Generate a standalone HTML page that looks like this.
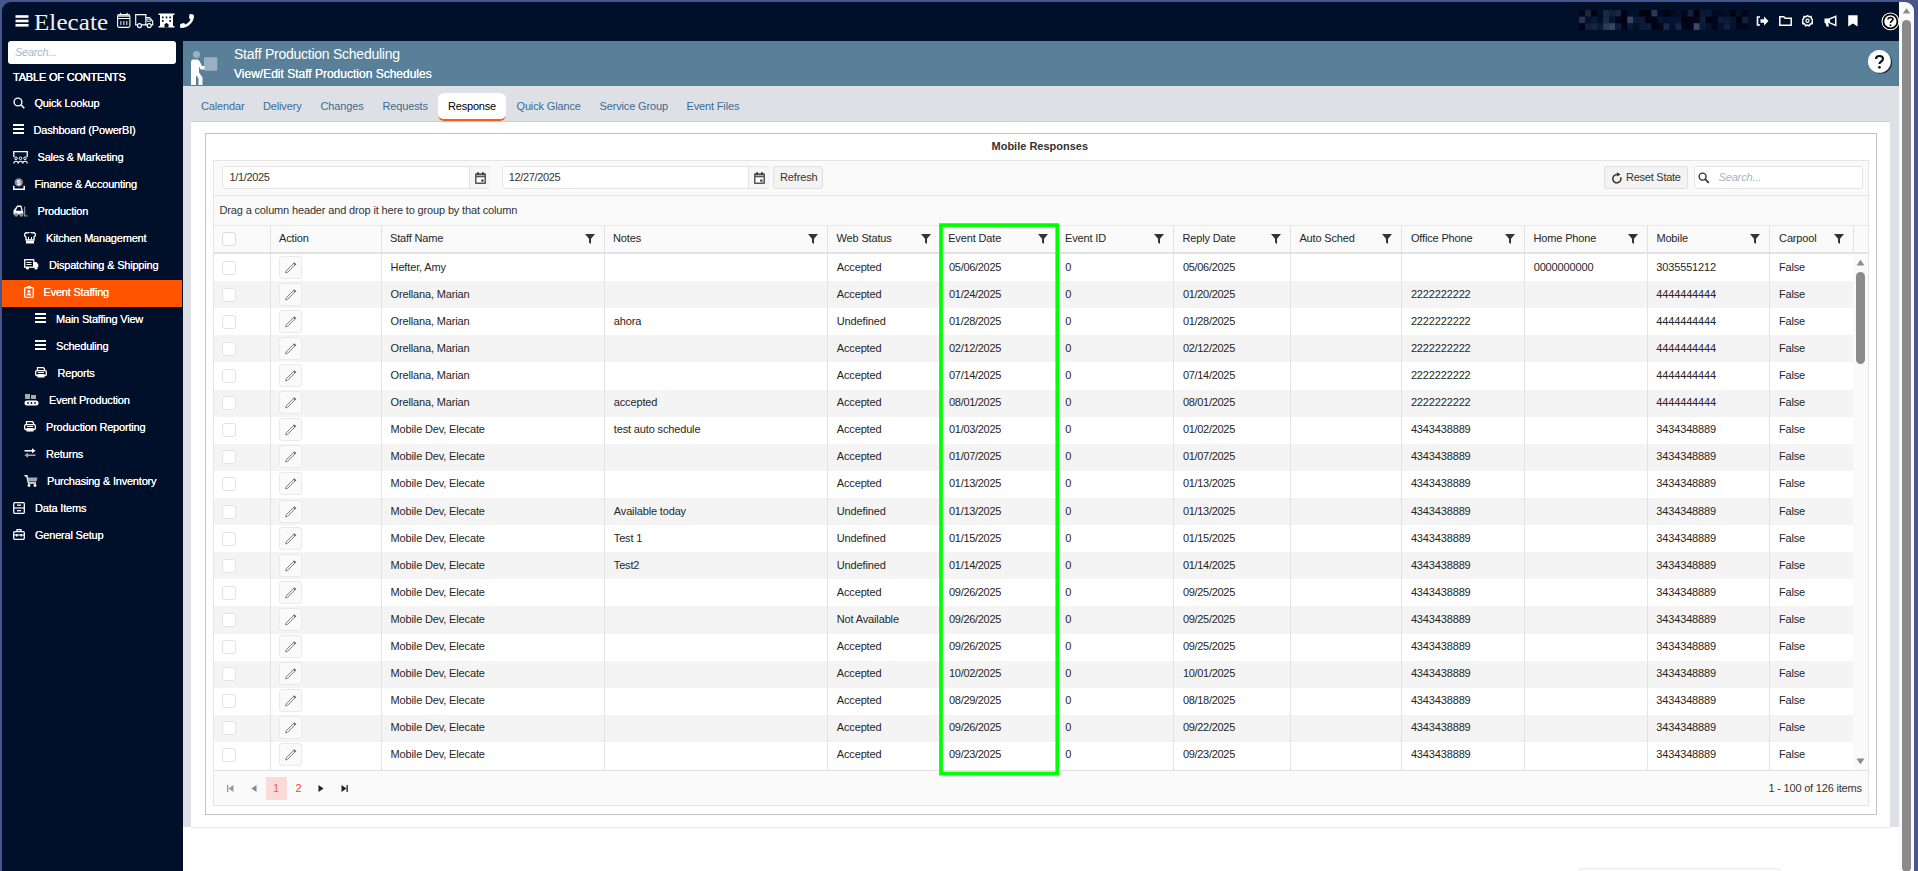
<!DOCTYPE html><html><head><meta charset="utf-8"><style>
html,body{margin:0;padding:0}
body{width:1918px;height:871px;overflow:hidden;background:#47568a;position:relative;font-family:'Liberation Sans', sans-serif}
.t{position:absolute;white-space:nowrap;font-family:'Liberation Sans', sans-serif}
svg{display:block}
</style></head><body>
<div style="position:absolute;left:2px;top:2px;width:1912px;height:869px;border-radius:9px 9px 0 0;overflow:hidden">
<div style="position:absolute;left:-2px;top:-2px;width:1918px;height:871px">
<div style="position:absolute;left:2px;top:2px;width:1897px;height:39px;background:#01102a"></div>
<div style="position:absolute;left:2px;top:41px;width:181px;height:830px;background:#01102a"></div>
<div style="position:absolute;left:183px;top:41px;width:1716px;height:45px;background:#5a7f99"></div>
<div style="position:absolute;left:183px;top:86px;width:1716px;height:741px;background:#dde1e6"></div>
<div style="position:absolute;left:183px;top:827px;width:1716px;height:44px;background:#fff"></div>
<div style="position:absolute;left:191px;top:121px;width:1699px;height:705px;background:#fff;border-top:1px solid #c9cdd2;border-bottom:1px solid #e8e8e8"></div>
<div style="position:absolute;left:1899px;top:2px;width:15px;height:869px;background:#fafafa"></div>
<div style="position:absolute;left:1902px;top:20px;width:9px;height:852px;background:#8b8b8b;border-radius:4.5px"></div>
<svg style="position:absolute;left:1902px;top:8px;" width="9" height="6" viewBox="0 0 9 6"><path d="M0.8 5.5 L4.5 0.2 L8.2 5.5Z" fill="#8b8b8b"/></svg>
<svg style="position:absolute;left:15px;top:15px;" width="14" height="12" viewBox="0 0 14 12"><rect x="0.5" y="0.2" width="13" height="2.6" fill="#fff"/><rect x="0.5" y="4.7" width="13" height="2.6" fill="#fff"/><rect x="0.5" y="9.0" width="13" height="2.6" fill="#fff"/></svg>
<div class="t" style="left:34px;top:11px;font-family:'Liberation Serif',serif;font-size:25px;line-height:25px;color:#f2f2f2;letter-spacing:0.1px;transform:scaleY(0.9);transform-origin:0 0">Elecate</div>
<svg style="position:absolute;left:117px;top:12px;" width="14" height="17" viewBox="0 0 14 17"><rect x="0.6" y="2.6" width="12.3" height="12.8" rx="1.6" fill="none" stroke="#fff" stroke-width="1.1"/><rect x="1" y="3.2" width="11.5" height="1.6" fill="#ddd"/><rect x="0.6" y="6" width="12.3" height="1" fill="#fff"/><rect x="3" y="0.8" width="1.1" height="2.4" fill="#fff"/><rect x="9.5" y="0.8" width="1.1" height="2.4" fill="#fff"/><rect x="3.3" y="9" width="1.1" height="4" fill="#fff" opacity="0.85"/><rect x="6.3" y="9" width="1.1" height="4" fill="#fff" opacity="0.85"/><rect x="9.2" y="9" width="1.1" height="4" fill="#fff" opacity="0.85"/></svg>
<svg style="position:absolute;left:135px;top:13px;" width="19" height="16" viewBox="0 0 19 16"><path d="M0.7 1.6 H10.8 V11.8 H0.7Z" fill="none" stroke="#fff" stroke-width="1.15"/><path d="M10.8 4.6 H14.6 L17.7 8.3 V11.8 H10.8" fill="none" stroke="#fff" stroke-width="1.15"/><path d="M12 6 L14 6 L16 8.3 H12Z" fill="none" stroke="#fff" stroke-width="0.8"/><circle cx="4.5" cy="12.6" r="2" fill="#01102a" stroke="#fff" stroke-width="1.15"/><circle cx="14.2" cy="12.6" r="2" fill="#01102a" stroke="#fff" stroke-width="1.15"/></svg>
<svg style="position:absolute;left:158px;top:13px;" width="17" height="15" viewBox="0 0 17 15"><path d="M0.5 0.5 H16.5 V2 H15 V13 H16.5 V14.5 H0.5 V13 H2 V2 H0.5Z" fill="#fff"/><rect x="4" y="3.5" width="1.6" height="1.8" fill="#01102a"/><rect x="7.7" y="3.5" width="1.6" height="1.8" fill="#01102a"/><rect x="11.4" y="3.5" width="1.6" height="1.8" fill="#01102a"/><rect x="4" y="7" width="1.6" height="1.8" fill="#01102a"/><rect x="11.4" y="7" width="1.6" height="1.8" fill="#01102a"/><path d="M6.5 11.5 Q8.5 8.5 10.5 11.5 V14.5 H6.5Z" fill="#01102a"/></svg>
<svg style="position:absolute;left:179px;top:13px;" width="16" height="16" viewBox="0 0 16 16"><path d="M10.5 1 L14.5 1.5 L15 4 C14 10 9 14.5 2.5 15 L1 14.5 L1.2 11 L5 10 L6.5 11.5 C8.5 10.5 10.5 8.5 11.5 6.5 L10 5Z" fill="#fff"/></svg>
<svg style="position:absolute;left:1579px;top:10.2px;" width="170" height="20" viewBox="0 0 170 20"><rect x="0.00" y="0.0" width="6.1" height="6.7" fill="#050318"/><rect x="6.04" y="0.0" width="6.1" height="6.7" fill="#1a2640"/><rect x="12.07" y="0.0" width="6.1" height="6.7" fill="#02020f"/><rect x="18.11" y="0.0" width="6.1" height="6.7" fill="#011028"/><rect x="24.14" y="0.0" width="6.1" height="6.7" fill="#1c2a45"/><rect x="30.18" y="0.0" width="6.1" height="6.7" fill="#142038"/><rect x="36.22" y="0.0" width="6.1" height="6.7" fill="#172540"/><rect x="42.25" y="0.0" width="6.1" height="6.7" fill="#02020f"/><rect x="48.29" y="0.0" width="6.1" height="6.7" fill="#011028"/><rect x="54.32" y="0.0" width="6.1" height="6.7" fill="#011028"/><rect x="60.36" y="0.0" width="6.1" height="6.7" fill="#02020f"/><rect x="66.40" y="0.0" width="6.1" height="6.7" fill="#02020f"/><rect x="72.43" y="0.0" width="6.1" height="6.7" fill="#2a3a58"/><rect x="78.47" y="0.0" width="6.1" height="6.7" fill="#010a22"/><rect x="84.50" y="0.0" width="6.1" height="6.7" fill="#02020f"/><rect x="90.54" y="0.0" width="6.1" height="6.7" fill="#030720"/><rect x="96.58" y="0.0" width="6.1" height="6.7" fill="#011028"/><rect x="102.61" y="0.0" width="6.1" height="6.7" fill="#03041a"/><rect x="108.65" y="0.0" width="6.1" height="6.7" fill="#142038"/><rect x="114.68" y="0.0" width="6.1" height="6.7" fill="#02020f"/><rect x="120.72" y="0.0" width="6.1" height="6.7" fill="#0a1a34"/><rect x="126.76" y="0.0" width="6.1" height="6.7" fill="#0a1a34"/><rect x="132.79" y="0.0" width="6.1" height="6.7" fill="#02081e"/><rect x="138.83" y="0.0" width="6.1" height="6.7" fill="#02081e"/><rect x="144.86" y="0.0" width="6.1" height="6.7" fill="#011028"/><rect x="150.90" y="0.0" width="6.1" height="6.7" fill="#02020f"/><rect x="156.94" y="0.0" width="6.1" height="6.7" fill="#011028"/><rect x="162.97" y="0.0" width="6.1" height="6.7" fill="#03041a"/><rect x="0.00" y="6.6" width="6.1" height="6.7" fill="#253555"/><rect x="6.04" y="6.6" width="6.1" height="6.7" fill="#021230"/><rect x="12.07" y="6.6" width="6.1" height="6.7" fill="#0a1a34"/><rect x="18.11" y="6.6" width="6.1" height="6.7" fill="#011028"/><rect x="24.14" y="6.6" width="6.1" height="6.7" fill="#1c2a45"/><rect x="30.18" y="6.6" width="6.1" height="6.7" fill="#061530"/><rect x="36.22" y="6.6" width="6.1" height="6.7" fill="#02061a"/><rect x="42.25" y="6.6" width="6.1" height="6.7" fill="#02020f"/><rect x="48.29" y="6.6" width="6.1" height="6.7" fill="#34466a"/><rect x="54.32" y="6.6" width="6.1" height="6.7" fill="#0a1a34"/><rect x="60.36" y="6.6" width="6.1" height="6.7" fill="#0c1a36"/><rect x="66.40" y="6.6" width="6.1" height="6.7" fill="#02021a"/><rect x="72.43" y="6.6" width="6.1" height="6.7" fill="#02031a"/><rect x="78.47" y="6.6" width="6.1" height="6.7" fill="#061530"/><rect x="84.50" y="6.6" width="6.1" height="6.7" fill="#021230"/><rect x="90.54" y="6.6" width="6.1" height="6.7" fill="#051530"/><rect x="96.58" y="6.6" width="6.1" height="6.7" fill="#051530"/><rect x="102.61" y="6.6" width="6.1" height="6.7" fill="#02020f"/><rect x="108.65" y="6.6" width="6.1" height="6.7" fill="#05041a"/><rect x="114.68" y="6.6" width="6.1" height="6.7" fill="#05041a"/><rect x="120.72" y="6.6" width="6.1" height="6.7" fill="#0f1d38"/><rect x="126.76" y="6.6" width="6.1" height="6.7" fill="#02020f"/><rect x="132.79" y="6.6" width="6.1" height="6.7" fill="#03051e"/><rect x="138.83" y="6.6" width="6.1" height="6.7" fill="#101d38"/><rect x="144.86" y="6.6" width="6.1" height="6.7" fill="#0c1a36"/><rect x="150.90" y="6.6" width="6.1" height="6.7" fill="#061530"/><rect x="156.94" y="6.6" width="6.1" height="6.7" fill="#02020f"/><rect x="162.97" y="6.6" width="6.1" height="6.7" fill="#142038"/><rect x="0.00" y="13.2" width="6.1" height="6.7" fill="#02020f"/><rect x="6.04" y="13.2" width="6.1" height="6.7" fill="#142038"/><rect x="12.07" y="13.2" width="6.1" height="6.7" fill="#172540"/><rect x="18.11" y="13.2" width="6.1" height="6.7" fill="#0c1a36"/><rect x="24.14" y="13.2" width="6.1" height="6.7" fill="#2a3a58"/><rect x="30.18" y="13.2" width="6.1" height="6.7" fill="#34466a"/><rect x="36.22" y="13.2" width="6.1" height="6.7" fill="#0f1d38"/><rect x="42.25" y="13.2" width="6.1" height="6.7" fill="#02031e"/><rect x="48.29" y="13.2" width="6.1" height="6.7" fill="#0a1a34"/><rect x="54.32" y="13.2" width="6.1" height="6.7" fill="#02102a"/><rect x="60.36" y="13.2" width="6.1" height="6.7" fill="#0c1a36"/><rect x="66.40" y="13.2" width="6.1" height="6.7" fill="#101d38"/><rect x="72.43" y="13.2" width="6.1" height="6.7" fill="#02020f"/><rect x="78.47" y="13.2" width="6.1" height="6.7" fill="#03051e"/><rect x="84.50" y="13.2" width="6.1" height="6.7" fill="#1c2a45"/><rect x="90.54" y="13.2" width="6.1" height="6.7" fill="#021230"/><rect x="96.58" y="13.2" width="6.1" height="6.7" fill="#1a2640"/><rect x="102.61" y="13.2" width="6.1" height="6.7" fill="#03041a"/><rect x="108.65" y="13.2" width="6.1" height="6.7" fill="#03041a"/><rect x="114.68" y="13.2" width="6.1" height="6.7" fill="#3a4a68"/><rect x="120.72" y="13.2" width="6.1" height="6.7" fill="#0c1a36"/><rect x="126.76" y="13.2" width="6.1" height="6.7" fill="#021230"/><rect x="132.79" y="13.2" width="6.1" height="6.7" fill="#03041a"/><rect x="138.83" y="13.2" width="6.1" height="6.7" fill="#021230"/><rect x="144.86" y="13.2" width="6.1" height="6.7" fill="#142038"/><rect x="150.90" y="13.2" width="6.1" height="6.7" fill="#021230"/><rect x="156.94" y="13.2" width="6.1" height="6.7" fill="#03051e"/><rect x="162.97" y="13.2" width="6.1" height="6.7" fill="#03041a"/></svg>
<svg style="position:absolute;left:1756px;top:16px;" width="13" height="10" viewBox="0 0 13 10"><path d="M4 1 H1.5 V9 H4" fill="none" stroke="#fff" stroke-width="1.6"/><path d="M4.5 3.3 H8 V0.5 L12.5 5 L8 9.5 V6.7 H4.5Z" fill="#fff"/></svg>
<svg style="position:absolute;left:1779px;top:16px;" width="13" height="10" viewBox="0 0 13 10"><path d="M0.8 0.8 H4.8 L6.2 2.3 H12.2 V9.2 H0.8Z" fill="none" stroke="#fff" stroke-width="1.5"/></svg>
<svg style="position:absolute;left:1802px;top:15px;" width="11" height="12" viewBox="0 0 11 12"><path d="M5.5 0.5 L7 1.8 L9 1.6 L9.4 3.6 L10.8 5 L10 6.8 L10.4 8.6 L8.4 9 L7.2 10.8 L5.5 10 L3.8 10.8 L2.6 9 L0.6 8.6 L1 6.8 L0.2 5 L1.6 3.6 L2 1.6 L4 1.8Z" fill="none" stroke="#fff" stroke-width="1.5"/><circle cx="5.5" cy="5.7" r="1.6" fill="none" stroke="#fff" stroke-width="1.2"/></svg>
<svg style="position:absolute;left:1824px;top:15px;" width="14" height="12" viewBox="0 0 14 12"><path d="M0.5 3.5 H4.5 L12.5 0.3 V11.5 L4.5 8 H4 L5 11.5 H2.5 L1.5 8 H0.5Z" fill="#fff"/><path d="M6 4.5 L11 2.5 V9.2 L6 7.2Z" fill="#01102a"/></svg>
<svg style="position:absolute;left:1848px;top:15px;" width="10" height="12" viewBox="0 0 10 12"><path d="M0.2 0.2 H9.6 V11.6 L4.9 8.6 L0.2 11.6Z" fill="#fff"/></svg>
<svg style="position:absolute;left:1881px;top:11.5px;" width="19" height="19" viewBox="0 0 19 19"><circle cx="9.4" cy="9.4" r="8.9" fill="#fff"/><circle cx="9.4" cy="9.4" r="7" fill="#fff" stroke="#000" stroke-width="1.8"/><path d="M7 7.4 C7 4.8 11.9 4.8 11.9 7.4 C11.9 9 9.5 9 9.5 11" fill="none" stroke="#000" stroke-width="1.6"/><circle cx="9.5" cy="13.3" r="1" fill="#000"/></svg>
<div style="position:absolute;left:8px;top:41px;width:168px;height:23px;background:#fff;border-radius:3px"></div>
<div class="t" style="left:15px;top:47px;font-size:11px;line-height:11px;color:#a3b8cf;font-weight:normal;font-style:italic;letter-spacing:-0.25px">Search...</div>
<div class="t" style="left:13px;top:72px;font-size:11px;line-height:11px;color:#fff;font-weight:normal;letter-spacing:-0.19px;text-shadow:0 0 0.5px #fff,0 0 0.5px #fff">TABLE OF CONTENTS</div>
<div class="t" style="left:34.5px;top:98px;font-size:11px;line-height:11px;color:#fff;font-weight:normal;letter-spacing:-0.2px;text-shadow:0 0 0.3px #fff">Quick Lookup</div>
<svg style="position:absolute;left:13px;top:97px" width="12" height="12" viewBox="0 0 12 12"><circle cx="5" cy="5" r="3.9" fill="none" stroke="#fff" stroke-width="1.4"/><line x1="7.8" y1="7.8" x2="11.3" y2="11.3" stroke="#fff" stroke-width="1.6"/></svg>
<div class="t" style="left:33.5px;top:125px;font-size:11px;line-height:11px;color:#fff;font-weight:normal;letter-spacing:-0.2px;text-shadow:0 0 0.3px #fff">Dashboard (PowerBI)</div>
<svg style="position:absolute;left:13px;top:124px" width="11" height="10" viewBox="0 0 11 10"><rect x="0" y="0" width="11" height="2" fill="#fff"/><rect x="0" y="4" width="11" height="2" fill="#fff"/><rect x="0" y="8" width="11" height="2" fill="#fff"/></svg>
<div class="t" style="left:37.5px;top:152px;font-size:11px;line-height:11px;color:#fff;font-weight:normal;letter-spacing:-0.2px;text-shadow:0 0 0.3px #fff">Sales &amp; Marketing</div>
<svg style="position:absolute;left:13px;top:151px" width="15" height="13" viewBox="0 0 15 13"><path d="M0.8 6 V0.7 H14.2 V6" fill="none" stroke="#fff" stroke-width="1.3"/><circle cx="3" cy="7.3" r="1.3" fill="none" stroke="#fff" stroke-width="1"/><circle cx="7.5" cy="7.3" r="1.3" fill="none" stroke="#fff" stroke-width="1"/><circle cx="12" cy="7.3" r="1.3" fill="none" stroke="#fff" stroke-width="1"/><path d="M0.8 12.5 A2.2 2.2 0 0 1 5.2 12.5 M5.3 12.5 A2.2 2.2 0 0 1 9.7 12.5 M9.8 12.5 A2.2 2.2 0 0 1 14.2 12.5" fill="none" stroke="#fff" stroke-width="1.1"/></svg>
<div class="t" style="left:34.5px;top:179px;font-size:11px;line-height:11px;color:#fff;font-weight:normal;letter-spacing:-0.2px;text-shadow:0 0 0.3px #fff">Finance &amp; Accounting</div>
<svg style="position:absolute;left:13px;top:178px" width="12" height="12" viewBox="0 0 12 12"><circle cx="5.8" cy="4.4" r="4.2" fill="#8a8c9a"/><text x="5.8" y="7" font-size="7" text-anchor="middle" fill="#fff" font-family="Liberation Sans" font-weight="bold">$</text><path d="M0.8 7.8 V11.2 H11.2 V7.8" fill="none" stroke="#fff" stroke-width="1.5"/></svg>
<div class="t" style="left:37.5px;top:206px;font-size:11px;line-height:11px;color:#fff;font-weight:normal;letter-spacing:-0.2px;text-shadow:0 0 0.3px #fff">Production</div>
<svg style="position:absolute;left:13px;top:205px" width="15" height="12" viewBox="0 0 15 12"><path d="M0.5 9.5 V5.5 L4.3 0.5 H8.3 L10.3 7.5 V9.5Z" fill="#fff"/><path d="M4.6 2 H7.5 L8.5 5.8 H2.8Z" fill="#01102a"/><circle cx="3.2" cy="9.8" r="1.9" fill="#8a8c9a"/><circle cx="8.3" cy="9.8" r="1.9" fill="#8a8c9a"/><path d="M11.6 1.5 V10.9 H14.5" fill="none" stroke="#8a8c9a" stroke-width="1.3"/></svg>
<div class="t" style="left:46px;top:233px;font-size:11px;line-height:11px;color:#fff;font-weight:normal;letter-spacing:-0.2px;text-shadow:0 0 0.3px #fff">Kitchen Management</div>
<svg style="position:absolute;left:24px;top:232px" width="12" height="12" viewBox="0 0 12 12"><path d="M2 5 C-1 3 1 0 4 1 C5 -0.5 7 -0.5 8 1 C11 0 13 3 10 5 V8 H2Z" fill="none" stroke="#fff" stroke-width="1.3"/><rect x="2" y="9" width="8" height="2.5" fill="#fff"/><line x1="4.5" y1="5" x2="4.5" y2="8" stroke="#fff"/><line x1="7.5" y1="5" x2="7.5" y2="8" stroke="#fff"/></svg>
<div class="t" style="left:49px;top:260px;font-size:11px;line-height:11px;color:#fff;font-weight:normal;letter-spacing:-0.2px;text-shadow:0 0 0.3px #fff">Dispatching &amp; Shipping</div>
<svg style="position:absolute;left:24px;top:259px" width="15" height="11" viewBox="0 0 15 11"><rect x="0.7" y="0.7" width="9" height="7.5" fill="none" stroke="#fff" stroke-width="1.3"/><path d="M9.7 3 H12.5 L14.3 5.5 V8.2 H9.7" fill="#fff"/><circle cx="3.5" cy="9" r="1.6" fill="#fff"/><circle cx="12" cy="9" r="1.6" fill="#fff"/><line x1="2.5" y1="3.5" x2="7.5" y2="3.5" stroke="#fff"/><line x1="2.5" y1="5.5" x2="7.5" y2="5.5" stroke="#fff"/></svg>
<div style="position:absolute;left:2px;top:280px;width:180px;height:27px;background:#ff5500"></div>
<div class="t" style="left:43.5px;top:287px;font-size:11px;line-height:11px;color:#fff;font-weight:normal;letter-spacing:-0.2px;text-shadow:0 0 0.3px #fff">Event Staffing</div>
<svg style="position:absolute;left:24px;top:286px" width="10" height="12" viewBox="0 0 10 12"><rect x="0.7" y="1.7" width="8.6" height="9.6" rx="1" fill="none" stroke="#fff" stroke-width="1.3"/><rect x="3.2" y="0" width="3.6" height="2.5" fill="#fff"/><circle cx="5" cy="5.5" r="1.4" fill="#fff"/><rect x="2.8" y="7.6" width="4.4" height="1.8" fill="#fff"/></svg>
<div class="t" style="left:56px;top:314px;font-size:11px;line-height:11px;color:#fff;font-weight:normal;letter-spacing:-0.2px;text-shadow:0 0 0.3px #fff">Main Staffing View</div>
<svg style="position:absolute;left:35px;top:313px" width="11" height="10" viewBox="0 0 11 10"><rect x="0" y="0" width="11" height="2" fill="#fff"/><rect x="0" y="4" width="11" height="2" fill="#fff"/><rect x="0" y="8" width="11" height="2" fill="#fff"/></svg>
<div class="t" style="left:56px;top:341px;font-size:11px;line-height:11px;color:#fff;font-weight:normal;letter-spacing:-0.2px;text-shadow:0 0 0.3px #fff">Scheduling</div>
<svg style="position:absolute;left:35px;top:340px" width="11" height="10" viewBox="0 0 11 10"><rect x="0" y="0" width="11" height="2" fill="#fff"/><rect x="0" y="4" width="11" height="2" fill="#fff"/><rect x="0" y="8" width="11" height="2" fill="#fff"/></svg>
<div class="t" style="left:57.5px;top:368px;font-size:11px;line-height:11px;color:#fff;font-weight:normal;letter-spacing:-0.2px;text-shadow:0 0 0.3px #fff">Reports</div>
<svg style="position:absolute;left:35px;top:367px" width="12" height="11" viewBox="0 0 12 11"><path d="M2.5 3.5 V0.7 H8.5 L9.5 1.7 V3.5" fill="none" stroke="#fff" stroke-width="1.3"/><rect x="0.7" y="3.7" width="10.6" height="4.8" rx="1" fill="none" stroke="#fff" stroke-width="1.3"/><rect x="2.5" y="7" width="7" height="3.5" fill="#fff"/><line x1="3" y1="5.5" x2="9" y2="5.5" stroke="#fff"/></svg>
<div class="t" style="left:49px;top:395px;font-size:11px;line-height:11px;color:#fff;font-weight:normal;letter-spacing:-0.2px;text-shadow:0 0 0.3px #fff">Event Production</div>
<svg style="position:absolute;left:24px;top:394px" width="15" height="12" viewBox="0 0 15 12"><rect x="1" y="0" width="5" height="5" fill="#aaa"/><rect x="7" y="1" width="5" height="4" fill="#aaa"/><rect x="0.5" y="6.5" width="14" height="5" rx="2.5" fill="#fff"/><circle cx="4" cy="9" r="0.9" fill="#01102a"/><circle cx="7.5" cy="9" r="0.9" fill="#01102a"/><circle cx="11" cy="9" r="0.9" fill="#01102a"/></svg>
<div class="t" style="left:46px;top:422px;font-size:11px;line-height:11px;color:#fff;font-weight:normal;letter-spacing:-0.2px;text-shadow:0 0 0.3px #fff">Production Reporting</div>
<svg style="position:absolute;left:24px;top:421px" width="12" height="11" viewBox="0 0 12 11"><path d="M2.5 3.5 V0.7 H8.5 L9.5 1.7 V3.5" fill="none" stroke="#fff" stroke-width="1.3"/><rect x="0.7" y="3.7" width="10.6" height="4.8" rx="1" fill="none" stroke="#fff" stroke-width="1.3"/><rect x="2.5" y="7" width="7" height="3.5" fill="#fff"/><line x1="3" y1="5.5" x2="9" y2="5.5" stroke="#fff"/></svg>
<div class="t" style="left:46px;top:449px;font-size:11px;line-height:11px;color:#fff;font-weight:normal;letter-spacing:-0.2px;text-shadow:0 0 0.3px #fff">Returns</div>
<svg style="position:absolute;left:24px;top:448px" width="12" height="10" viewBox="0 0 12 10"><path d="M0.5 2.8 H9" stroke="#fff" stroke-width="1.5"/><path d="M8 0.3 L11.5 2.8 L8 5.2Z" fill="#fff"/><path d="M11.5 7.2 H3" stroke="#aaa" stroke-width="1.5"/><path d="M4 4.8 L0.5 7.2 L4 9.7Z" fill="#aaa"/></svg>
<div class="t" style="left:47px;top:476px;font-size:11px;line-height:11px;color:#fff;font-weight:normal;letter-spacing:-0.2px;text-shadow:0 0 0.3px #fff">Purchasing &amp; Inventory</div>
<svg style="position:absolute;left:24px;top:475px" width="14" height="12" viewBox="0 0 14 12"><path d="M0.5 0.8 H2.8 L4.5 8 H12" fill="none" stroke="#fff" stroke-width="1.5"/><path d="M3.3 2.5 H13.5 L12.5 6.5 H4.2Z" fill="#aaa"/><circle cx="5" cy="10.5" r="1.4" fill="#fff"/><circle cx="11" cy="10.5" r="1.4" fill="#fff"/></svg>
<div class="t" style="left:35px;top:503px;font-size:11px;line-height:11px;color:#fff;font-weight:normal;letter-spacing:-0.2px;text-shadow:0 0 0.3px #fff">Data Items</div>
<svg style="position:absolute;left:13px;top:502px" width="12" height="12" viewBox="0 0 12 12"><rect x="0.7" y="0.7" width="10.6" height="10.6" rx="1" fill="none" stroke="#fff" stroke-width="1.3"/><line x1="0.7" y1="6" x2="11.3" y2="6" stroke="#fff" stroke-width="1.2"/><rect x="4" y="2.5" width="4" height="1.3" fill="#fff"/><rect x="4" y="8" width="4" height="1.3" fill="#fff"/></svg>
<div class="t" style="left:35px;top:530px;font-size:11px;line-height:11px;color:#fff;font-weight:normal;letter-spacing:-0.2px;text-shadow:0 0 0.3px #fff">General Setup</div>
<svg style="position:absolute;left:13px;top:529px" width="12" height="11" viewBox="0 0 12 11"><path d="M4 2.5 V0.7 H8 V2.5" fill="none" stroke="#fff" stroke-width="1.3"/><rect x="0.7" y="2.7" width="10.6" height="7.6" rx="1" fill="none" stroke="#fff" stroke-width="1.3"/><line x1="0.7" y1="6" x2="11.3" y2="6" stroke="#fff" stroke-width="1.2"/><rect x="3" y="5" width="1.5" height="2.5" fill="#fff"/><rect x="7.5" y="5" width="1.5" height="2.5" fill="#fff"/></svg>
<svg style="position:absolute;left:188px;top:48px;" width="32" height="38" viewBox="0 0 32 38"><circle cx="8.5" cy="6.5" r="3.6" fill="#9ab0c0"/><rect x="16" y="9.2" width="13.3" height="13.5" rx="1" fill="#9ab0c0"/><path d="M5 11.5 C3.5 11.5 3 13 3 14.5 V37 H8 V27 L10.5 30.5 V37 H14.5 V29.5 L11 24.5 V18.5 L12.8 21.5 H16.5 V18 H14 L11.5 13 C10.5 11.8 9.5 11.5 8.5 11.5Z" fill="#fff"/></svg>
<div class="t" style="left:234px;top:47px;font-size:14px;line-height:14px;color:#fff;font-weight:normal;letter-spacing:-0.25px">Staff Production Scheduling</div>
<div class="t" style="left:234px;top:68px;font-size:12px;line-height:12px;color:#fff;font-weight:normal;text-shadow:0 0 0.4px #fff">View/Edit Staff Production Schedules</div>
<svg style="position:absolute;left:1866px;top:49px;" width="27" height="27" viewBox="0 0 27 27"><circle cx="14.8" cy="13.4" r="11.3" fill="#1a2230" opacity="0.85"/><circle cx="13.4" cy="12.4" r="11.4" fill="#fff"/><path d="M10 10 C10 6 17 6 17 10 C17 12.5 13.4 12.5 13.4 15" fill="none" stroke="#0a1428" stroke-width="2.2"/><circle cx="13.4" cy="18.3" r="1.4" fill="#0a1428"/></svg>
<div class="t" style="left:201px;top:101px;font-size:11px;line-height:11px;color:#3f6a93;font-weight:normal;letter-spacing:-0.15px">Calendar</div>
<div class="t" style="left:263px;top:101px;font-size:11px;line-height:11px;color:#3f6a93;font-weight:normal;letter-spacing:-0.15px">Delivery</div>
<div class="t" style="left:320.5px;top:101px;font-size:11px;line-height:11px;color:#3f6a93;font-weight:normal;letter-spacing:-0.15px">Changes</div>
<div class="t" style="left:382.5px;top:101px;font-size:11px;line-height:11px;color:#3f6a93;font-weight:normal;letter-spacing:-0.15px">Requests</div>
<div class="t" style="left:516.5px;top:101px;font-size:11px;line-height:11px;color:#3f6a93;font-weight:normal;letter-spacing:-0.15px">Quick Glance</div>
<div class="t" style="left:599.5px;top:101px;font-size:11px;line-height:11px;color:#3f6a93;font-weight:normal;letter-spacing:-0.15px">Service Group</div>
<div class="t" style="left:686.5px;top:101px;font-size:11px;line-height:11px;color:#3f6a93;font-weight:normal;letter-spacing:-0.15px">Event Files</div>
<div style="position:absolute;left:438px;top:93px;width:68px;height:28px;background:#fff;border-radius:6px;box-sizing:border-box;border-bottom:2px solid #ff5a1a"></div>
<div class="t" style="left:448px;top:101px;font-size:11px;line-height:11px;color:#000;font-weight:normal;letter-spacing:-0.2px">Response</div>
<div style="position:absolute;left:205px;top:133px;width:1672px;height:682px;box-sizing:border-box;border:1px solid #c2c2c2;background:#fff"></div>
<div class="t" style="left:991.5px;top:141px;font-size:11px;line-height:11px;color:#333;font-weight:bold;">Mobile Responses</div>
<div style="position:absolute;left:213px;top:160px;width:1656px;height:646px;box-sizing:border-box;border:1px solid #e5e5e5;background:#fff"></div>
<div style="position:absolute;left:214px;top:161px;width:1654px;height:34px;background:#fafafa"></div>
<div style="position:absolute;left:214px;top:195px;width:1654px;height:1px;background:#e5e5e5"></div>
<div style="position:absolute;left:214px;top:196px;width:1654px;height:29px;background:#fafafa"></div>
<div style="position:absolute;left:214px;top:225px;width:1654px;height:1px;background:#e8e8e8"></div>
<div class="t" style="left:219.5px;top:205px;font-size:11px;line-height:11px;color:#333;font-weight:normal;letter-spacing:-0.15px">Drag a column header and drop it here to group by that column</div>
<div style="position:absolute;left:222px;top:166px;width:269px;height:23px;box-sizing:border-box;border:1px solid #e4e4e4;border-radius:3px;background:#fff"></div>
<div style="position:absolute;left:469px;top:167px;width:21px;height:21px;background:#f6f6f6;border-left:1px solid #e4e4e4;border-radius:0 2px 2px 0"></div>
<div class="t" style="left:229.5px;top:172px;font-size:11px;line-height:11px;color:#333;font-weight:normal;letter-spacing:-0.35px">1/1/2025</div>
<svg style="position:absolute;left:475.4px;top:172px;" width="11" height="12" viewBox="0 0 11 12"><rect x="0" y="1.3" width="11" height="10.7" rx="1" fill="#555"/><rect x="1.5" y="5.3" width="8" height="5.2" fill="#fff"/><rect x="1.5" y="3" width="8" height="1" fill="#fff" opacity="0.55"/><rect x="2.3" y="0" width="1.5" height="2.8" rx="0.7" fill="#222"/><rect x="7.2" y="0" width="1.5" height="2.8" rx="0.7" fill="#222"/><rect x="6.3" y="7.6" width="2.2" height="2" fill="#222"/></svg>
<div style="position:absolute;left:502px;top:166px;width:268px;height:23px;box-sizing:border-box;border:1px solid #e4e4e4;border-radius:3px;background:#fff"></div>
<div style="position:absolute;left:748px;top:167px;width:21px;height:21px;background:#f6f6f6;border-left:1px solid #e4e4e4;border-radius:0 2px 2px 0"></div>
<div class="t" style="left:508.7px;top:172px;font-size:11px;line-height:11px;color:#333;font-weight:normal;letter-spacing:-0.35px">12/27/2025</div>
<svg style="position:absolute;left:754.4px;top:172px;" width="11" height="12" viewBox="0 0 11 12"><rect x="0" y="1.3" width="11" height="10.7" rx="1" fill="#555"/><rect x="1.5" y="5.3" width="8" height="5.2" fill="#fff"/><rect x="1.5" y="3" width="8" height="1" fill="#fff" opacity="0.55"/><rect x="2.3" y="0" width="1.5" height="2.8" rx="0.7" fill="#222"/><rect x="7.2" y="0" width="1.5" height="2.8" rx="0.7" fill="#222"/><rect x="6.3" y="7.6" width="2.2" height="2" fill="#222"/></svg>
<div style="position:absolute;left:773px;top:166px;width:50px;height:23px;box-sizing:border-box;border:1px solid #e0e0e0;border-radius:3px;background:#f3f3f3"></div>
<div class="t" style="left:780px;top:172px;font-size:11px;line-height:11px;color:#333;font-weight:normal;letter-spacing:-0.15px">Refresh</div>
<div style="position:absolute;left:1604px;top:166px;width:84px;height:23px;box-sizing:border-box;border:1px solid #e0e0e0;border-radius:3px;background:#f3f3f3"></div>
<svg style="position:absolute;left:1611px;top:172px;" width="12" height="13" viewBox="0 0 12 13"><path d="M5.9 2.6 A4.1 4.1 0 1 0 9.75 5.3" fill="none" stroke="#333" stroke-width="1.5"/><path d="M5.9 0.3 L5.9 4.6 L9.6 2.4Z" fill="#333"/></svg>
<div class="t" style="left:1626px;top:172px;font-size:11px;line-height:11px;color:#333;font-weight:normal;letter-spacing:-0.25px">Reset State</div>
<div style="position:absolute;left:1694px;top:166px;width:169px;height:23px;box-sizing:border-box;border:1px solid #e4e4e4;border-radius:3px;background:#fff"></div>
<svg style="position:absolute;left:1698px;top:172px;" width="12" height="12" viewBox="0 0 12 12"><circle cx="4.6" cy="4.6" r="3.5" fill="none" stroke="#333" stroke-width="1.4"/><line x1="7.2" y1="7.2" x2="10.8" y2="10.8" stroke="#333" stroke-width="1.7"/></svg>
<div class="t" style="left:1718.5px;top:172px;font-size:11px;line-height:11px;color:#a0b4c8;font-weight:normal;font-style:italic;letter-spacing:-0.15px">Search...</div>
<div style="position:absolute;left:214px;top:226px;width:1654px;height:26px;background:#fafafa"></div>
<div style="position:absolute;left:214px;top:252px;width:1654px;height:2px;background:#e2e2e2"></div>
<div style="position:absolute;left:270px;top:226px;width:1px;height:26px;background:#e2e2e2"></div>
<div class="t" style="left:279px;top:233px;font-size:11px;line-height:11px;color:#262626;font-weight:normal;letter-spacing:-0.15px">Action</div>
<div style="position:absolute;left:381px;top:226px;width:1px;height:26px;background:#e2e2e2"></div>
<div class="t" style="left:390px;top:233px;font-size:11px;line-height:11px;color:#262626;font-weight:normal;letter-spacing:-0.15px">Staff Name</div>
<svg style="position:absolute;left:585px;top:234px;" width="10" height="10" viewBox="0 0 10 10"><path d="M0 0 H10 L6 4.8 V10 L4 8.5 V4.8Z" fill="#333"/></svg>
<div style="position:absolute;left:604px;top:226px;width:1px;height:26px;background:#e2e2e2"></div>
<div class="t" style="left:613px;top:233px;font-size:11px;line-height:11px;color:#262626;font-weight:normal;letter-spacing:-0.15px">Notes</div>
<svg style="position:absolute;left:808px;top:234px;" width="10" height="10" viewBox="0 0 10 10"><path d="M0 0 H10 L6 4.8 V10 L4 8.5 V4.8Z" fill="#333"/></svg>
<div style="position:absolute;left:827px;top:226px;width:1px;height:26px;background:#e2e2e2"></div>
<div class="t" style="left:836.5px;top:233px;font-size:11px;line-height:11px;color:#262626;font-weight:normal;letter-spacing:-0.15px">Web Status</div>
<svg style="position:absolute;left:921px;top:234px;" width="10" height="10" viewBox="0 0 10 10"><path d="M0 0 H10 L6 4.8 V10 L4 8.5 V4.8Z" fill="#333"/></svg>
<div style="position:absolute;left:940px;top:226px;width:1px;height:26px;background:#e2e2e2"></div>
<div class="t" style="left:948.2px;top:233px;font-size:11px;line-height:11px;color:#262626;font-weight:normal;letter-spacing:-0.15px">Event Date</div>
<svg style="position:absolute;left:1038px;top:234px;" width="10" height="10" viewBox="0 0 10 10"><path d="M0 0 H10 L6 4.8 V10 L4 8.5 V4.8Z" fill="#333"/></svg>
<div style="position:absolute;left:1057px;top:226px;width:1px;height:26px;background:#e2e2e2"></div>
<div class="t" style="left:1065.0px;top:233px;font-size:11px;line-height:11px;color:#262626;font-weight:normal;letter-spacing:-0.15px">Event ID</div>
<svg style="position:absolute;left:1154px;top:234px;" width="10" height="10" viewBox="0 0 10 10"><path d="M0 0 H10 L6 4.8 V10 L4 8.5 V4.8Z" fill="#333"/></svg>
<div style="position:absolute;left:1173px;top:226px;width:1px;height:26px;background:#e2e2e2"></div>
<div class="t" style="left:1182.5px;top:233px;font-size:11px;line-height:11px;color:#262626;font-weight:normal;letter-spacing:-0.15px">Reply Date</div>
<svg style="position:absolute;left:1271px;top:234px;" width="10" height="10" viewBox="0 0 10 10"><path d="M0 0 H10 L6 4.8 V10 L4 8.5 V4.8Z" fill="#333"/></svg>
<div style="position:absolute;left:1290px;top:226px;width:1px;height:26px;background:#e2e2e2"></div>
<div class="t" style="left:1299.4px;top:233px;font-size:11px;line-height:11px;color:#262626;font-weight:normal;letter-spacing:-0.15px">Auto Sched</div>
<svg style="position:absolute;left:1382px;top:234px;" width="10" height="10" viewBox="0 0 10 10"><path d="M0 0 H10 L6 4.8 V10 L4 8.5 V4.8Z" fill="#333"/></svg>
<div style="position:absolute;left:1401px;top:226px;width:1px;height:26px;background:#e2e2e2"></div>
<div class="t" style="left:1410.9px;top:233px;font-size:11px;line-height:11px;color:#262626;font-weight:normal;letter-spacing:-0.15px">Office Phone</div>
<svg style="position:absolute;left:1505px;top:234px;" width="10" height="10" viewBox="0 0 10 10"><path d="M0 0 H10 L6 4.8 V10 L4 8.5 V4.8Z" fill="#333"/></svg>
<div style="position:absolute;left:1524px;top:226px;width:1px;height:26px;background:#e2e2e2"></div>
<div class="t" style="left:1533.5px;top:233px;font-size:11px;line-height:11px;color:#262626;font-weight:normal;letter-spacing:-0.15px">Home Phone</div>
<svg style="position:absolute;left:1628px;top:234px;" width="10" height="10" viewBox="0 0 10 10"><path d="M0 0 H10 L6 4.8 V10 L4 8.5 V4.8Z" fill="#333"/></svg>
<div style="position:absolute;left:1647px;top:226px;width:1px;height:26px;background:#e2e2e2"></div>
<div class="t" style="left:1656.4px;top:233px;font-size:11px;line-height:11px;color:#262626;font-weight:normal;letter-spacing:-0.15px">Mobile</div>
<svg style="position:absolute;left:1750px;top:234px;" width="10" height="10" viewBox="0 0 10 10"><path d="M0 0 H10 L6 4.8 V10 L4 8.5 V4.8Z" fill="#333"/></svg>
<div style="position:absolute;left:1769px;top:226px;width:1px;height:26px;background:#e2e2e2"></div>
<div class="t" style="left:1779.1px;top:233px;font-size:11px;line-height:11px;color:#262626;font-weight:normal;letter-spacing:-0.15px">Carpool</div>
<svg style="position:absolute;left:1834px;top:234px;" width="10" height="10" viewBox="0 0 10 10"><path d="M0 0 H10 L6 4.8 V10 L4 8.5 V4.8Z" fill="#333"/></svg>
<div style="position:absolute;left:1853px;top:226px;width:1px;height:26px;background:#e2e2e2"></div>
<div style="position:absolute;left:222px;top:232px;width:14px;height:14px;box-sizing:border-box;border:1px solid #dcdcdc;border-radius:3px;background:#fff"></div>
<div style="position:absolute;left:214px;top:281px;width:1639px;height:27px;background:#f4f4f4"></div>
<div style="position:absolute;left:214px;top:335px;width:1639px;height:27px;background:#f4f4f4"></div>
<div style="position:absolute;left:214px;top:390px;width:1639px;height:27px;background:#f4f4f4"></div>
<div style="position:absolute;left:214px;top:444px;width:1639px;height:27px;background:#f4f4f4"></div>
<div style="position:absolute;left:214px;top:498px;width:1639px;height:27px;background:#f4f4f4"></div>
<div style="position:absolute;left:214px;top:552px;width:1639px;height:27px;background:#f4f4f4"></div>
<div style="position:absolute;left:214px;top:606px;width:1639px;height:28px;background:#f4f4f4"></div>
<div style="position:absolute;left:214px;top:661px;width:1639px;height:27px;background:#f4f4f4"></div>
<div style="position:absolute;left:214px;top:715px;width:1639px;height:27px;background:#f4f4f4"></div>
<div style="position:absolute;left:222px;top:261px;width:14px;height:14px;box-sizing:border-box;border:1px solid #e3e3e3;border-radius:3px;background:#fff"></div>
<div style="position:absolute;left:279px;top:256px;width:23px;height:23px;box-sizing:border-box;border:1px solid #e9e9e9;border-radius:3px;background:#fafafa"></div>
<svg style="position:absolute;left:285.3px;top:261.5px;" width="12" height="12" viewBox="0 0 12 12"><path d="M0.6 10.9 L1.1 8.9 L8.9 1.1 L10.4 2.6 L2.6 10.4Z" fill="none" stroke="#7a7a7a" stroke-width="0.9" stroke-linejoin="round"/><path d="M8.5 1.5 L10 3 L10.8 2.2 L9.3 0.7Z" fill="#666" stroke="#666" stroke-width="0.8"/><line x1="2" y1="9.5" x2="9" y2="2.5" stroke="#aaa" stroke-width="0.6" stroke-dasharray="1 1"/></svg>
<div class="t" style="left:390.6px;top:262px;font-size:11px;line-height:11px;color:#262626;font-weight:normal;letter-spacing:-0.15px">Hefter, Amy</div>
<div class="t" style="left:836.8px;top:262px;font-size:11px;line-height:11px;color:#262626;font-weight:normal;letter-spacing:-0.15px">Accepted</div>
<div class="t" style="left:949px;top:262px;font-size:11px;line-height:11px;color:#262626;font-weight:normal;letter-spacing:-0.3px">05/06/2025</div>
<div class="t" style="left:1065.2px;top:262px;font-size:11px;line-height:11px;color:#262626;font-weight:normal;letter-spacing:-0.15px">0</div>
<div class="t" style="left:1182.9px;top:262px;font-size:11px;line-height:11px;color:#262626;font-weight:normal;letter-spacing:-0.3px">05/06/2025</div>
<div class="t" style="left:1533.7px;top:262px;font-size:11px;line-height:11px;color:#262626;font-weight:normal;letter-spacing:-0.15px">0000000000</div>
<div class="t" style="left:1656.3px;top:262px;font-size:11px;line-height:11px;color:#262626;font-weight:normal;letter-spacing:-0.15px">3035551212</div>
<div class="t" style="left:1778.9px;top:262px;font-size:11px;line-height:11px;color:#262626;font-weight:normal;letter-spacing:-0.15px">False</div>
<div style="position:absolute;left:222px;top:288px;width:14px;height:14px;box-sizing:border-box;border:1px solid #e3e3e3;border-radius:3px;background:#fff"></div>
<div style="position:absolute;left:279px;top:283px;width:23px;height:23px;box-sizing:border-box;border:1px solid #e9e9e9;border-radius:3px;background:#fafafa"></div>
<svg style="position:absolute;left:285.3px;top:288.5px;" width="12" height="12" viewBox="0 0 12 12"><path d="M0.6 10.9 L1.1 8.9 L8.9 1.1 L10.4 2.6 L2.6 10.4Z" fill="none" stroke="#7a7a7a" stroke-width="0.9" stroke-linejoin="round"/><path d="M8.5 1.5 L10 3 L10.8 2.2 L9.3 0.7Z" fill="#666" stroke="#666" stroke-width="0.8"/><line x1="2" y1="9.5" x2="9" y2="2.5" stroke="#aaa" stroke-width="0.6" stroke-dasharray="1 1"/></svg>
<div class="t" style="left:390.6px;top:289px;font-size:11px;line-height:11px;color:#262626;font-weight:normal;letter-spacing:-0.15px">Orellana, Marian</div>
<div class="t" style="left:836.8px;top:289px;font-size:11px;line-height:11px;color:#262626;font-weight:normal;letter-spacing:-0.15px">Accepted</div>
<div class="t" style="left:949px;top:289px;font-size:11px;line-height:11px;color:#262626;font-weight:normal;letter-spacing:-0.3px">01/24/2025</div>
<div class="t" style="left:1065.2px;top:289px;font-size:11px;line-height:11px;color:#262626;font-weight:normal;letter-spacing:-0.15px">0</div>
<div class="t" style="left:1182.9px;top:289px;font-size:11px;line-height:11px;color:#262626;font-weight:normal;letter-spacing:-0.3px">01/20/2025</div>
<div class="t" style="left:1410.9px;top:289px;font-size:11px;line-height:11px;color:#262626;font-weight:normal;letter-spacing:-0.15px">2222222222</div>
<div class="t" style="left:1656.3px;top:289px;font-size:11px;line-height:11px;color:#262626;font-weight:normal;letter-spacing:-0.15px">4444444444</div>
<div class="t" style="left:1778.9px;top:289px;font-size:11px;line-height:11px;color:#262626;font-weight:normal;letter-spacing:-0.15px">False</div>
<div style="position:absolute;left:222px;top:315px;width:14px;height:14px;box-sizing:border-box;border:1px solid #e3e3e3;border-radius:3px;background:#fff"></div>
<div style="position:absolute;left:279px;top:310px;width:23px;height:23px;box-sizing:border-box;border:1px solid #e9e9e9;border-radius:3px;background:#fafafa"></div>
<svg style="position:absolute;left:285.3px;top:315.5px;" width="12" height="12" viewBox="0 0 12 12"><path d="M0.6 10.9 L1.1 8.9 L8.9 1.1 L10.4 2.6 L2.6 10.4Z" fill="none" stroke="#7a7a7a" stroke-width="0.9" stroke-linejoin="round"/><path d="M8.5 1.5 L10 3 L10.8 2.2 L9.3 0.7Z" fill="#666" stroke="#666" stroke-width="0.8"/><line x1="2" y1="9.5" x2="9" y2="2.5" stroke="#aaa" stroke-width="0.6" stroke-dasharray="1 1"/></svg>
<div class="t" style="left:390.6px;top:316px;font-size:11px;line-height:11px;color:#262626;font-weight:normal;letter-spacing:-0.15px">Orellana, Marian</div>
<div class="t" style="left:613.8px;top:316px;font-size:11px;line-height:11px;color:#262626;font-weight:normal;letter-spacing:-0.15px">ahora</div>
<div class="t" style="left:836.8px;top:316px;font-size:11px;line-height:11px;color:#262626;font-weight:normal;letter-spacing:-0.15px">Undefined</div>
<div class="t" style="left:949px;top:316px;font-size:11px;line-height:11px;color:#262626;font-weight:normal;letter-spacing:-0.3px">01/28/2025</div>
<div class="t" style="left:1065.2px;top:316px;font-size:11px;line-height:11px;color:#262626;font-weight:normal;letter-spacing:-0.15px">0</div>
<div class="t" style="left:1182.9px;top:316px;font-size:11px;line-height:11px;color:#262626;font-weight:normal;letter-spacing:-0.3px">01/28/2025</div>
<div class="t" style="left:1410.9px;top:316px;font-size:11px;line-height:11px;color:#262626;font-weight:normal;letter-spacing:-0.15px">2222222222</div>
<div class="t" style="left:1656.3px;top:316px;font-size:11px;line-height:11px;color:#262626;font-weight:normal;letter-spacing:-0.15px">4444444444</div>
<div class="t" style="left:1778.9px;top:316px;font-size:11px;line-height:11px;color:#262626;font-weight:normal;letter-spacing:-0.15px">False</div>
<div style="position:absolute;left:222px;top:342px;width:14px;height:14px;box-sizing:border-box;border:1px solid #e3e3e3;border-radius:3px;background:#fff"></div>
<div style="position:absolute;left:279px;top:337px;width:23px;height:23px;box-sizing:border-box;border:1px solid #e9e9e9;border-radius:3px;background:#fafafa"></div>
<svg style="position:absolute;left:285.3px;top:342.5px;" width="12" height="12" viewBox="0 0 12 12"><path d="M0.6 10.9 L1.1 8.9 L8.9 1.1 L10.4 2.6 L2.6 10.4Z" fill="none" stroke="#7a7a7a" stroke-width="0.9" stroke-linejoin="round"/><path d="M8.5 1.5 L10 3 L10.8 2.2 L9.3 0.7Z" fill="#666" stroke="#666" stroke-width="0.8"/><line x1="2" y1="9.5" x2="9" y2="2.5" stroke="#aaa" stroke-width="0.6" stroke-dasharray="1 1"/></svg>
<div class="t" style="left:390.6px;top:343px;font-size:11px;line-height:11px;color:#262626;font-weight:normal;letter-spacing:-0.15px">Orellana, Marian</div>
<div class="t" style="left:836.8px;top:343px;font-size:11px;line-height:11px;color:#262626;font-weight:normal;letter-spacing:-0.15px">Accepted</div>
<div class="t" style="left:949px;top:343px;font-size:11px;line-height:11px;color:#262626;font-weight:normal;letter-spacing:-0.3px">02/12/2025</div>
<div class="t" style="left:1065.2px;top:343px;font-size:11px;line-height:11px;color:#262626;font-weight:normal;letter-spacing:-0.15px">0</div>
<div class="t" style="left:1182.9px;top:343px;font-size:11px;line-height:11px;color:#262626;font-weight:normal;letter-spacing:-0.3px">02/12/2025</div>
<div class="t" style="left:1410.9px;top:343px;font-size:11px;line-height:11px;color:#262626;font-weight:normal;letter-spacing:-0.15px">2222222222</div>
<div class="t" style="left:1656.3px;top:343px;font-size:11px;line-height:11px;color:#262626;font-weight:normal;letter-spacing:-0.15px">4444444444</div>
<div class="t" style="left:1778.9px;top:343px;font-size:11px;line-height:11px;color:#262626;font-weight:normal;letter-spacing:-0.15px">False</div>
<div style="position:absolute;left:222px;top:369px;width:14px;height:14px;box-sizing:border-box;border:1px solid #e3e3e3;border-radius:3px;background:#fff"></div>
<div style="position:absolute;left:279px;top:364px;width:23px;height:23px;box-sizing:border-box;border:1px solid #e9e9e9;border-radius:3px;background:#fafafa"></div>
<svg style="position:absolute;left:285.3px;top:369.5px;" width="12" height="12" viewBox="0 0 12 12"><path d="M0.6 10.9 L1.1 8.9 L8.9 1.1 L10.4 2.6 L2.6 10.4Z" fill="none" stroke="#7a7a7a" stroke-width="0.9" stroke-linejoin="round"/><path d="M8.5 1.5 L10 3 L10.8 2.2 L9.3 0.7Z" fill="#666" stroke="#666" stroke-width="0.8"/><line x1="2" y1="9.5" x2="9" y2="2.5" stroke="#aaa" stroke-width="0.6" stroke-dasharray="1 1"/></svg>
<div class="t" style="left:390.6px;top:370px;font-size:11px;line-height:11px;color:#262626;font-weight:normal;letter-spacing:-0.15px">Orellana, Marian</div>
<div class="t" style="left:836.8px;top:370px;font-size:11px;line-height:11px;color:#262626;font-weight:normal;letter-spacing:-0.15px">Accepted</div>
<div class="t" style="left:949px;top:370px;font-size:11px;line-height:11px;color:#262626;font-weight:normal;letter-spacing:-0.3px">07/14/2025</div>
<div class="t" style="left:1065.2px;top:370px;font-size:11px;line-height:11px;color:#262626;font-weight:normal;letter-spacing:-0.15px">0</div>
<div class="t" style="left:1182.9px;top:370px;font-size:11px;line-height:11px;color:#262626;font-weight:normal;letter-spacing:-0.3px">07/14/2025</div>
<div class="t" style="left:1410.9px;top:370px;font-size:11px;line-height:11px;color:#262626;font-weight:normal;letter-spacing:-0.15px">2222222222</div>
<div class="t" style="left:1656.3px;top:370px;font-size:11px;line-height:11px;color:#262626;font-weight:normal;letter-spacing:-0.15px">4444444444</div>
<div class="t" style="left:1778.9px;top:370px;font-size:11px;line-height:11px;color:#262626;font-weight:normal;letter-spacing:-0.15px">False</div>
<div style="position:absolute;left:222px;top:396px;width:14px;height:14px;box-sizing:border-box;border:1px solid #e3e3e3;border-radius:3px;background:#fff"></div>
<div style="position:absolute;left:279px;top:391px;width:23px;height:23px;box-sizing:border-box;border:1px solid #e9e9e9;border-radius:3px;background:#fafafa"></div>
<svg style="position:absolute;left:285.3px;top:396.5px;" width="12" height="12" viewBox="0 0 12 12"><path d="M0.6 10.9 L1.1 8.9 L8.9 1.1 L10.4 2.6 L2.6 10.4Z" fill="none" stroke="#7a7a7a" stroke-width="0.9" stroke-linejoin="round"/><path d="M8.5 1.5 L10 3 L10.8 2.2 L9.3 0.7Z" fill="#666" stroke="#666" stroke-width="0.8"/><line x1="2" y1="9.5" x2="9" y2="2.5" stroke="#aaa" stroke-width="0.6" stroke-dasharray="1 1"/></svg>
<div class="t" style="left:390.6px;top:397px;font-size:11px;line-height:11px;color:#262626;font-weight:normal;letter-spacing:-0.15px">Orellana, Marian</div>
<div class="t" style="left:613.8px;top:397px;font-size:11px;line-height:11px;color:#262626;font-weight:normal;letter-spacing:-0.15px">accepted</div>
<div class="t" style="left:836.8px;top:397px;font-size:11px;line-height:11px;color:#262626;font-weight:normal;letter-spacing:-0.15px">Accepted</div>
<div class="t" style="left:949px;top:397px;font-size:11px;line-height:11px;color:#262626;font-weight:normal;letter-spacing:-0.3px">08/01/2025</div>
<div class="t" style="left:1065.2px;top:397px;font-size:11px;line-height:11px;color:#262626;font-weight:normal;letter-spacing:-0.15px">0</div>
<div class="t" style="left:1182.9px;top:397px;font-size:11px;line-height:11px;color:#262626;font-weight:normal;letter-spacing:-0.3px">08/01/2025</div>
<div class="t" style="left:1410.9px;top:397px;font-size:11px;line-height:11px;color:#262626;font-weight:normal;letter-spacing:-0.15px">2222222222</div>
<div class="t" style="left:1656.3px;top:397px;font-size:11px;line-height:11px;color:#262626;font-weight:normal;letter-spacing:-0.15px">4444444444</div>
<div class="t" style="left:1778.9px;top:397px;font-size:11px;line-height:11px;color:#262626;font-weight:normal;letter-spacing:-0.15px">False</div>
<div style="position:absolute;left:222px;top:423px;width:14px;height:14px;box-sizing:border-box;border:1px solid #e3e3e3;border-radius:3px;background:#fff"></div>
<div style="position:absolute;left:279px;top:418px;width:23px;height:23px;box-sizing:border-box;border:1px solid #e9e9e9;border-radius:3px;background:#fafafa"></div>
<svg style="position:absolute;left:285.3px;top:423.5px;" width="12" height="12" viewBox="0 0 12 12"><path d="M0.6 10.9 L1.1 8.9 L8.9 1.1 L10.4 2.6 L2.6 10.4Z" fill="none" stroke="#7a7a7a" stroke-width="0.9" stroke-linejoin="round"/><path d="M8.5 1.5 L10 3 L10.8 2.2 L9.3 0.7Z" fill="#666" stroke="#666" stroke-width="0.8"/><line x1="2" y1="9.5" x2="9" y2="2.5" stroke="#aaa" stroke-width="0.6" stroke-dasharray="1 1"/></svg>
<div class="t" style="left:390.6px;top:424px;font-size:11px;line-height:11px;color:#262626;font-weight:normal;letter-spacing:-0.15px">Mobile Dev, Elecate</div>
<div class="t" style="left:613.8px;top:424px;font-size:11px;line-height:11px;color:#262626;font-weight:normal;letter-spacing:-0.15px">test auto schedule</div>
<div class="t" style="left:836.8px;top:424px;font-size:11px;line-height:11px;color:#262626;font-weight:normal;letter-spacing:-0.15px">Accepted</div>
<div class="t" style="left:949px;top:424px;font-size:11px;line-height:11px;color:#262626;font-weight:normal;letter-spacing:-0.3px">01/03/2025</div>
<div class="t" style="left:1065.2px;top:424px;font-size:11px;line-height:11px;color:#262626;font-weight:normal;letter-spacing:-0.15px">0</div>
<div class="t" style="left:1182.9px;top:424px;font-size:11px;line-height:11px;color:#262626;font-weight:normal;letter-spacing:-0.3px">01/02/2025</div>
<div class="t" style="left:1410.9px;top:424px;font-size:11px;line-height:11px;color:#262626;font-weight:normal;letter-spacing:-0.15px">4343438889</div>
<div class="t" style="left:1656.3px;top:424px;font-size:11px;line-height:11px;color:#262626;font-weight:normal;letter-spacing:-0.15px">3434348889</div>
<div class="t" style="left:1778.9px;top:424px;font-size:11px;line-height:11px;color:#262626;font-weight:normal;letter-spacing:-0.15px">False</div>
<div style="position:absolute;left:222px;top:450px;width:14px;height:14px;box-sizing:border-box;border:1px solid #e3e3e3;border-radius:3px;background:#fff"></div>
<div style="position:absolute;left:279px;top:445px;width:23px;height:23px;box-sizing:border-box;border:1px solid #e9e9e9;border-radius:3px;background:#fafafa"></div>
<svg style="position:absolute;left:285.3px;top:450.5px;" width="12" height="12" viewBox="0 0 12 12"><path d="M0.6 10.9 L1.1 8.9 L8.9 1.1 L10.4 2.6 L2.6 10.4Z" fill="none" stroke="#7a7a7a" stroke-width="0.9" stroke-linejoin="round"/><path d="M8.5 1.5 L10 3 L10.8 2.2 L9.3 0.7Z" fill="#666" stroke="#666" stroke-width="0.8"/><line x1="2" y1="9.5" x2="9" y2="2.5" stroke="#aaa" stroke-width="0.6" stroke-dasharray="1 1"/></svg>
<div class="t" style="left:390.6px;top:451px;font-size:11px;line-height:11px;color:#262626;font-weight:normal;letter-spacing:-0.15px">Mobile Dev, Elecate</div>
<div class="t" style="left:836.8px;top:451px;font-size:11px;line-height:11px;color:#262626;font-weight:normal;letter-spacing:-0.15px">Accepted</div>
<div class="t" style="left:949px;top:451px;font-size:11px;line-height:11px;color:#262626;font-weight:normal;letter-spacing:-0.3px">01/07/2025</div>
<div class="t" style="left:1065.2px;top:451px;font-size:11px;line-height:11px;color:#262626;font-weight:normal;letter-spacing:-0.15px">0</div>
<div class="t" style="left:1182.9px;top:451px;font-size:11px;line-height:11px;color:#262626;font-weight:normal;letter-spacing:-0.3px">01/07/2025</div>
<div class="t" style="left:1410.9px;top:451px;font-size:11px;line-height:11px;color:#262626;font-weight:normal;letter-spacing:-0.15px">4343438889</div>
<div class="t" style="left:1656.3px;top:451px;font-size:11px;line-height:11px;color:#262626;font-weight:normal;letter-spacing:-0.15px">3434348889</div>
<div class="t" style="left:1778.9px;top:451px;font-size:11px;line-height:11px;color:#262626;font-weight:normal;letter-spacing:-0.15px">False</div>
<div style="position:absolute;left:222px;top:477px;width:14px;height:14px;box-sizing:border-box;border:1px solid #e3e3e3;border-radius:3px;background:#fff"></div>
<div style="position:absolute;left:279px;top:472px;width:23px;height:23px;box-sizing:border-box;border:1px solid #e9e9e9;border-radius:3px;background:#fafafa"></div>
<svg style="position:absolute;left:285.3px;top:477.5px;" width="12" height="12" viewBox="0 0 12 12"><path d="M0.6 10.9 L1.1 8.9 L8.9 1.1 L10.4 2.6 L2.6 10.4Z" fill="none" stroke="#7a7a7a" stroke-width="0.9" stroke-linejoin="round"/><path d="M8.5 1.5 L10 3 L10.8 2.2 L9.3 0.7Z" fill="#666" stroke="#666" stroke-width="0.8"/><line x1="2" y1="9.5" x2="9" y2="2.5" stroke="#aaa" stroke-width="0.6" stroke-dasharray="1 1"/></svg>
<div class="t" style="left:390.6px;top:478px;font-size:11px;line-height:11px;color:#262626;font-weight:normal;letter-spacing:-0.15px">Mobile Dev, Elecate</div>
<div class="t" style="left:836.8px;top:478px;font-size:11px;line-height:11px;color:#262626;font-weight:normal;letter-spacing:-0.15px">Accepted</div>
<div class="t" style="left:949px;top:478px;font-size:11px;line-height:11px;color:#262626;font-weight:normal;letter-spacing:-0.3px">01/13/2025</div>
<div class="t" style="left:1065.2px;top:478px;font-size:11px;line-height:11px;color:#262626;font-weight:normal;letter-spacing:-0.15px">0</div>
<div class="t" style="left:1182.9px;top:478px;font-size:11px;line-height:11px;color:#262626;font-weight:normal;letter-spacing:-0.3px">01/13/2025</div>
<div class="t" style="left:1410.9px;top:478px;font-size:11px;line-height:11px;color:#262626;font-weight:normal;letter-spacing:-0.15px">4343438889</div>
<div class="t" style="left:1656.3px;top:478px;font-size:11px;line-height:11px;color:#262626;font-weight:normal;letter-spacing:-0.15px">3434348889</div>
<div class="t" style="left:1778.9px;top:478px;font-size:11px;line-height:11px;color:#262626;font-weight:normal;letter-spacing:-0.15px">False</div>
<div style="position:absolute;left:222px;top:505px;width:14px;height:14px;box-sizing:border-box;border:1px solid #e3e3e3;border-radius:3px;background:#fff"></div>
<div style="position:absolute;left:279px;top:500px;width:23px;height:23px;box-sizing:border-box;border:1px solid #e9e9e9;border-radius:3px;background:#fafafa"></div>
<svg style="position:absolute;left:285.3px;top:505.5px;" width="12" height="12" viewBox="0 0 12 12"><path d="M0.6 10.9 L1.1 8.9 L8.9 1.1 L10.4 2.6 L2.6 10.4Z" fill="none" stroke="#7a7a7a" stroke-width="0.9" stroke-linejoin="round"/><path d="M8.5 1.5 L10 3 L10.8 2.2 L9.3 0.7Z" fill="#666" stroke="#666" stroke-width="0.8"/><line x1="2" y1="9.5" x2="9" y2="2.5" stroke="#aaa" stroke-width="0.6" stroke-dasharray="1 1"/></svg>
<div class="t" style="left:390.6px;top:506px;font-size:11px;line-height:11px;color:#262626;font-weight:normal;letter-spacing:-0.15px">Mobile Dev, Elecate</div>
<div class="t" style="left:613.8px;top:506px;font-size:11px;line-height:11px;color:#262626;font-weight:normal;letter-spacing:-0.15px">Available today</div>
<div class="t" style="left:836.8px;top:506px;font-size:11px;line-height:11px;color:#262626;font-weight:normal;letter-spacing:-0.15px">Undefined</div>
<div class="t" style="left:949px;top:506px;font-size:11px;line-height:11px;color:#262626;font-weight:normal;letter-spacing:-0.3px">01/13/2025</div>
<div class="t" style="left:1065.2px;top:506px;font-size:11px;line-height:11px;color:#262626;font-weight:normal;letter-spacing:-0.15px">0</div>
<div class="t" style="left:1182.9px;top:506px;font-size:11px;line-height:11px;color:#262626;font-weight:normal;letter-spacing:-0.3px">01/13/2025</div>
<div class="t" style="left:1410.9px;top:506px;font-size:11px;line-height:11px;color:#262626;font-weight:normal;letter-spacing:-0.15px">4343438889</div>
<div class="t" style="left:1656.3px;top:506px;font-size:11px;line-height:11px;color:#262626;font-weight:normal;letter-spacing:-0.15px">3434348889</div>
<div class="t" style="left:1778.9px;top:506px;font-size:11px;line-height:11px;color:#262626;font-weight:normal;letter-spacing:-0.15px">False</div>
<div style="position:absolute;left:222px;top:532px;width:14px;height:14px;box-sizing:border-box;border:1px solid #e3e3e3;border-radius:3px;background:#fff"></div>
<div style="position:absolute;left:279px;top:527px;width:23px;height:23px;box-sizing:border-box;border:1px solid #e9e9e9;border-radius:3px;background:#fafafa"></div>
<svg style="position:absolute;left:285.3px;top:532.5px;" width="12" height="12" viewBox="0 0 12 12"><path d="M0.6 10.9 L1.1 8.9 L8.9 1.1 L10.4 2.6 L2.6 10.4Z" fill="none" stroke="#7a7a7a" stroke-width="0.9" stroke-linejoin="round"/><path d="M8.5 1.5 L10 3 L10.8 2.2 L9.3 0.7Z" fill="#666" stroke="#666" stroke-width="0.8"/><line x1="2" y1="9.5" x2="9" y2="2.5" stroke="#aaa" stroke-width="0.6" stroke-dasharray="1 1"/></svg>
<div class="t" style="left:390.6px;top:533px;font-size:11px;line-height:11px;color:#262626;font-weight:normal;letter-spacing:-0.15px">Mobile Dev, Elecate</div>
<div class="t" style="left:613.8px;top:533px;font-size:11px;line-height:11px;color:#262626;font-weight:normal;letter-spacing:-0.15px">Test 1</div>
<div class="t" style="left:836.8px;top:533px;font-size:11px;line-height:11px;color:#262626;font-weight:normal;letter-spacing:-0.15px">Undefined</div>
<div class="t" style="left:949px;top:533px;font-size:11px;line-height:11px;color:#262626;font-weight:normal;letter-spacing:-0.3px">01/15/2025</div>
<div class="t" style="left:1065.2px;top:533px;font-size:11px;line-height:11px;color:#262626;font-weight:normal;letter-spacing:-0.15px">0</div>
<div class="t" style="left:1182.9px;top:533px;font-size:11px;line-height:11px;color:#262626;font-weight:normal;letter-spacing:-0.3px">01/15/2025</div>
<div class="t" style="left:1410.9px;top:533px;font-size:11px;line-height:11px;color:#262626;font-weight:normal;letter-spacing:-0.15px">4343438889</div>
<div class="t" style="left:1656.3px;top:533px;font-size:11px;line-height:11px;color:#262626;font-weight:normal;letter-spacing:-0.15px">3434348889</div>
<div class="t" style="left:1778.9px;top:533px;font-size:11px;line-height:11px;color:#262626;font-weight:normal;letter-spacing:-0.15px">False</div>
<div style="position:absolute;left:222px;top:559px;width:14px;height:14px;box-sizing:border-box;border:1px solid #e3e3e3;border-radius:3px;background:#fff"></div>
<div style="position:absolute;left:279px;top:554px;width:23px;height:23px;box-sizing:border-box;border:1px solid #e9e9e9;border-radius:3px;background:#fafafa"></div>
<svg style="position:absolute;left:285.3px;top:559.5px;" width="12" height="12" viewBox="0 0 12 12"><path d="M0.6 10.9 L1.1 8.9 L8.9 1.1 L10.4 2.6 L2.6 10.4Z" fill="none" stroke="#7a7a7a" stroke-width="0.9" stroke-linejoin="round"/><path d="M8.5 1.5 L10 3 L10.8 2.2 L9.3 0.7Z" fill="#666" stroke="#666" stroke-width="0.8"/><line x1="2" y1="9.5" x2="9" y2="2.5" stroke="#aaa" stroke-width="0.6" stroke-dasharray="1 1"/></svg>
<div class="t" style="left:390.6px;top:560px;font-size:11px;line-height:11px;color:#262626;font-weight:normal;letter-spacing:-0.15px">Mobile Dev, Elecate</div>
<div class="t" style="left:613.8px;top:560px;font-size:11px;line-height:11px;color:#262626;font-weight:normal;letter-spacing:-0.15px">Test2</div>
<div class="t" style="left:836.8px;top:560px;font-size:11px;line-height:11px;color:#262626;font-weight:normal;letter-spacing:-0.15px">Undefined</div>
<div class="t" style="left:949px;top:560px;font-size:11px;line-height:11px;color:#262626;font-weight:normal;letter-spacing:-0.3px">01/14/2025</div>
<div class="t" style="left:1065.2px;top:560px;font-size:11px;line-height:11px;color:#262626;font-weight:normal;letter-spacing:-0.15px">0</div>
<div class="t" style="left:1182.9px;top:560px;font-size:11px;line-height:11px;color:#262626;font-weight:normal;letter-spacing:-0.3px">01/14/2025</div>
<div class="t" style="left:1410.9px;top:560px;font-size:11px;line-height:11px;color:#262626;font-weight:normal;letter-spacing:-0.15px">4343438889</div>
<div class="t" style="left:1656.3px;top:560px;font-size:11px;line-height:11px;color:#262626;font-weight:normal;letter-spacing:-0.15px">3434348889</div>
<div class="t" style="left:1778.9px;top:560px;font-size:11px;line-height:11px;color:#262626;font-weight:normal;letter-spacing:-0.15px">False</div>
<div style="position:absolute;left:222px;top:586px;width:14px;height:14px;box-sizing:border-box;border:1px solid #e3e3e3;border-radius:3px;background:#fff"></div>
<div style="position:absolute;left:279px;top:581px;width:23px;height:23px;box-sizing:border-box;border:1px solid #e9e9e9;border-radius:3px;background:#fafafa"></div>
<svg style="position:absolute;left:285.3px;top:586.5px;" width="12" height="12" viewBox="0 0 12 12"><path d="M0.6 10.9 L1.1 8.9 L8.9 1.1 L10.4 2.6 L2.6 10.4Z" fill="none" stroke="#7a7a7a" stroke-width="0.9" stroke-linejoin="round"/><path d="M8.5 1.5 L10 3 L10.8 2.2 L9.3 0.7Z" fill="#666" stroke="#666" stroke-width="0.8"/><line x1="2" y1="9.5" x2="9" y2="2.5" stroke="#aaa" stroke-width="0.6" stroke-dasharray="1 1"/></svg>
<div class="t" style="left:390.6px;top:587px;font-size:11px;line-height:11px;color:#262626;font-weight:normal;letter-spacing:-0.15px">Mobile Dev, Elecate</div>
<div class="t" style="left:836.8px;top:587px;font-size:11px;line-height:11px;color:#262626;font-weight:normal;letter-spacing:-0.15px">Accepted</div>
<div class="t" style="left:949px;top:587px;font-size:11px;line-height:11px;color:#262626;font-weight:normal;letter-spacing:-0.3px">09/26/2025</div>
<div class="t" style="left:1065.2px;top:587px;font-size:11px;line-height:11px;color:#262626;font-weight:normal;letter-spacing:-0.15px">0</div>
<div class="t" style="left:1182.9px;top:587px;font-size:11px;line-height:11px;color:#262626;font-weight:normal;letter-spacing:-0.3px">09/25/2025</div>
<div class="t" style="left:1410.9px;top:587px;font-size:11px;line-height:11px;color:#262626;font-weight:normal;letter-spacing:-0.15px">4343438889</div>
<div class="t" style="left:1656.3px;top:587px;font-size:11px;line-height:11px;color:#262626;font-weight:normal;letter-spacing:-0.15px">3434348889</div>
<div class="t" style="left:1778.9px;top:587px;font-size:11px;line-height:11px;color:#262626;font-weight:normal;letter-spacing:-0.15px">False</div>
<div style="position:absolute;left:222px;top:613px;width:14px;height:14px;box-sizing:border-box;border:1px solid #e3e3e3;border-radius:3px;background:#fff"></div>
<div style="position:absolute;left:279px;top:608px;width:23px;height:23px;box-sizing:border-box;border:1px solid #e9e9e9;border-radius:3px;background:#fafafa"></div>
<svg style="position:absolute;left:285.3px;top:613.5px;" width="12" height="12" viewBox="0 0 12 12"><path d="M0.6 10.9 L1.1 8.9 L8.9 1.1 L10.4 2.6 L2.6 10.4Z" fill="none" stroke="#7a7a7a" stroke-width="0.9" stroke-linejoin="round"/><path d="M8.5 1.5 L10 3 L10.8 2.2 L9.3 0.7Z" fill="#666" stroke="#666" stroke-width="0.8"/><line x1="2" y1="9.5" x2="9" y2="2.5" stroke="#aaa" stroke-width="0.6" stroke-dasharray="1 1"/></svg>
<div class="t" style="left:390.6px;top:614px;font-size:11px;line-height:11px;color:#262626;font-weight:normal;letter-spacing:-0.15px">Mobile Dev, Elecate</div>
<div class="t" style="left:836.8px;top:614px;font-size:11px;line-height:11px;color:#262626;font-weight:normal;letter-spacing:-0.15px">Not Available</div>
<div class="t" style="left:949px;top:614px;font-size:11px;line-height:11px;color:#262626;font-weight:normal;letter-spacing:-0.3px">09/26/2025</div>
<div class="t" style="left:1065.2px;top:614px;font-size:11px;line-height:11px;color:#262626;font-weight:normal;letter-spacing:-0.15px">0</div>
<div class="t" style="left:1182.9px;top:614px;font-size:11px;line-height:11px;color:#262626;font-weight:normal;letter-spacing:-0.3px">09/25/2025</div>
<div class="t" style="left:1410.9px;top:614px;font-size:11px;line-height:11px;color:#262626;font-weight:normal;letter-spacing:-0.15px">4343438889</div>
<div class="t" style="left:1656.3px;top:614px;font-size:11px;line-height:11px;color:#262626;font-weight:normal;letter-spacing:-0.15px">3434348889</div>
<div class="t" style="left:1778.9px;top:614px;font-size:11px;line-height:11px;color:#262626;font-weight:normal;letter-spacing:-0.15px">False</div>
<div style="position:absolute;left:222px;top:640px;width:14px;height:14px;box-sizing:border-box;border:1px solid #e3e3e3;border-radius:3px;background:#fff"></div>
<div style="position:absolute;left:279px;top:635px;width:23px;height:23px;box-sizing:border-box;border:1px solid #e9e9e9;border-radius:3px;background:#fafafa"></div>
<svg style="position:absolute;left:285.3px;top:640.5px;" width="12" height="12" viewBox="0 0 12 12"><path d="M0.6 10.9 L1.1 8.9 L8.9 1.1 L10.4 2.6 L2.6 10.4Z" fill="none" stroke="#7a7a7a" stroke-width="0.9" stroke-linejoin="round"/><path d="M8.5 1.5 L10 3 L10.8 2.2 L9.3 0.7Z" fill="#666" stroke="#666" stroke-width="0.8"/><line x1="2" y1="9.5" x2="9" y2="2.5" stroke="#aaa" stroke-width="0.6" stroke-dasharray="1 1"/></svg>
<div class="t" style="left:390.6px;top:641px;font-size:11px;line-height:11px;color:#262626;font-weight:normal;letter-spacing:-0.15px">Mobile Dev, Elecate</div>
<div class="t" style="left:836.8px;top:641px;font-size:11px;line-height:11px;color:#262626;font-weight:normal;letter-spacing:-0.15px">Accepted</div>
<div class="t" style="left:949px;top:641px;font-size:11px;line-height:11px;color:#262626;font-weight:normal;letter-spacing:-0.3px">09/26/2025</div>
<div class="t" style="left:1065.2px;top:641px;font-size:11px;line-height:11px;color:#262626;font-weight:normal;letter-spacing:-0.15px">0</div>
<div class="t" style="left:1182.9px;top:641px;font-size:11px;line-height:11px;color:#262626;font-weight:normal;letter-spacing:-0.3px">09/25/2025</div>
<div class="t" style="left:1410.9px;top:641px;font-size:11px;line-height:11px;color:#262626;font-weight:normal;letter-spacing:-0.15px">4343438889</div>
<div class="t" style="left:1656.3px;top:641px;font-size:11px;line-height:11px;color:#262626;font-weight:normal;letter-spacing:-0.15px">3434348889</div>
<div class="t" style="left:1778.9px;top:641px;font-size:11px;line-height:11px;color:#262626;font-weight:normal;letter-spacing:-0.15px">False</div>
<div style="position:absolute;left:222px;top:667px;width:14px;height:14px;box-sizing:border-box;border:1px solid #e3e3e3;border-radius:3px;background:#fff"></div>
<div style="position:absolute;left:279px;top:662px;width:23px;height:23px;box-sizing:border-box;border:1px solid #e9e9e9;border-radius:3px;background:#fafafa"></div>
<svg style="position:absolute;left:285.3px;top:667.5px;" width="12" height="12" viewBox="0 0 12 12"><path d="M0.6 10.9 L1.1 8.9 L8.9 1.1 L10.4 2.6 L2.6 10.4Z" fill="none" stroke="#7a7a7a" stroke-width="0.9" stroke-linejoin="round"/><path d="M8.5 1.5 L10 3 L10.8 2.2 L9.3 0.7Z" fill="#666" stroke="#666" stroke-width="0.8"/><line x1="2" y1="9.5" x2="9" y2="2.5" stroke="#aaa" stroke-width="0.6" stroke-dasharray="1 1"/></svg>
<div class="t" style="left:390.6px;top:668px;font-size:11px;line-height:11px;color:#262626;font-weight:normal;letter-spacing:-0.15px">Mobile Dev, Elecate</div>
<div class="t" style="left:836.8px;top:668px;font-size:11px;line-height:11px;color:#262626;font-weight:normal;letter-spacing:-0.15px">Accepted</div>
<div class="t" style="left:949px;top:668px;font-size:11px;line-height:11px;color:#262626;font-weight:normal;letter-spacing:-0.3px">10/02/2025</div>
<div class="t" style="left:1065.2px;top:668px;font-size:11px;line-height:11px;color:#262626;font-weight:normal;letter-spacing:-0.15px">0</div>
<div class="t" style="left:1182.9px;top:668px;font-size:11px;line-height:11px;color:#262626;font-weight:normal;letter-spacing:-0.3px">10/01/2025</div>
<div class="t" style="left:1410.9px;top:668px;font-size:11px;line-height:11px;color:#262626;font-weight:normal;letter-spacing:-0.15px">4343438889</div>
<div class="t" style="left:1656.3px;top:668px;font-size:11px;line-height:11px;color:#262626;font-weight:normal;letter-spacing:-0.15px">3434348889</div>
<div class="t" style="left:1778.9px;top:668px;font-size:11px;line-height:11px;color:#262626;font-weight:normal;letter-spacing:-0.15px">False</div>
<div style="position:absolute;left:222px;top:694px;width:14px;height:14px;box-sizing:border-box;border:1px solid #e3e3e3;border-radius:3px;background:#fff"></div>
<div style="position:absolute;left:279px;top:689px;width:23px;height:23px;box-sizing:border-box;border:1px solid #e9e9e9;border-radius:3px;background:#fafafa"></div>
<svg style="position:absolute;left:285.3px;top:694.5px;" width="12" height="12" viewBox="0 0 12 12"><path d="M0.6 10.9 L1.1 8.9 L8.9 1.1 L10.4 2.6 L2.6 10.4Z" fill="none" stroke="#7a7a7a" stroke-width="0.9" stroke-linejoin="round"/><path d="M8.5 1.5 L10 3 L10.8 2.2 L9.3 0.7Z" fill="#666" stroke="#666" stroke-width="0.8"/><line x1="2" y1="9.5" x2="9" y2="2.5" stroke="#aaa" stroke-width="0.6" stroke-dasharray="1 1"/></svg>
<div class="t" style="left:390.6px;top:695px;font-size:11px;line-height:11px;color:#262626;font-weight:normal;letter-spacing:-0.15px">Mobile Dev, Elecate</div>
<div class="t" style="left:836.8px;top:695px;font-size:11px;line-height:11px;color:#262626;font-weight:normal;letter-spacing:-0.15px">Accepted</div>
<div class="t" style="left:949px;top:695px;font-size:11px;line-height:11px;color:#262626;font-weight:normal;letter-spacing:-0.3px">08/29/2025</div>
<div class="t" style="left:1065.2px;top:695px;font-size:11px;line-height:11px;color:#262626;font-weight:normal;letter-spacing:-0.15px">0</div>
<div class="t" style="left:1182.9px;top:695px;font-size:11px;line-height:11px;color:#262626;font-weight:normal;letter-spacing:-0.3px">08/18/2025</div>
<div class="t" style="left:1410.9px;top:695px;font-size:11px;line-height:11px;color:#262626;font-weight:normal;letter-spacing:-0.15px">4343438889</div>
<div class="t" style="left:1656.3px;top:695px;font-size:11px;line-height:11px;color:#262626;font-weight:normal;letter-spacing:-0.15px">3434348889</div>
<div class="t" style="left:1778.9px;top:695px;font-size:11px;line-height:11px;color:#262626;font-weight:normal;letter-spacing:-0.15px">False</div>
<div style="position:absolute;left:222px;top:721px;width:14px;height:14px;box-sizing:border-box;border:1px solid #e3e3e3;border-radius:3px;background:#fff"></div>
<div style="position:absolute;left:279px;top:716px;width:23px;height:23px;box-sizing:border-box;border:1px solid #e9e9e9;border-radius:3px;background:#fafafa"></div>
<svg style="position:absolute;left:285.3px;top:721.5px;" width="12" height="12" viewBox="0 0 12 12"><path d="M0.6 10.9 L1.1 8.9 L8.9 1.1 L10.4 2.6 L2.6 10.4Z" fill="none" stroke="#7a7a7a" stroke-width="0.9" stroke-linejoin="round"/><path d="M8.5 1.5 L10 3 L10.8 2.2 L9.3 0.7Z" fill="#666" stroke="#666" stroke-width="0.8"/><line x1="2" y1="9.5" x2="9" y2="2.5" stroke="#aaa" stroke-width="0.6" stroke-dasharray="1 1"/></svg>
<div class="t" style="left:390.6px;top:722px;font-size:11px;line-height:11px;color:#262626;font-weight:normal;letter-spacing:-0.15px">Mobile Dev, Elecate</div>
<div class="t" style="left:836.8px;top:722px;font-size:11px;line-height:11px;color:#262626;font-weight:normal;letter-spacing:-0.15px">Accepted</div>
<div class="t" style="left:949px;top:722px;font-size:11px;line-height:11px;color:#262626;font-weight:normal;letter-spacing:-0.3px">09/26/2025</div>
<div class="t" style="left:1065.2px;top:722px;font-size:11px;line-height:11px;color:#262626;font-weight:normal;letter-spacing:-0.15px">0</div>
<div class="t" style="left:1182.9px;top:722px;font-size:11px;line-height:11px;color:#262626;font-weight:normal;letter-spacing:-0.3px">09/22/2025</div>
<div class="t" style="left:1410.9px;top:722px;font-size:11px;line-height:11px;color:#262626;font-weight:normal;letter-spacing:-0.15px">4343438889</div>
<div class="t" style="left:1656.3px;top:722px;font-size:11px;line-height:11px;color:#262626;font-weight:normal;letter-spacing:-0.15px">3434348889</div>
<div class="t" style="left:1778.9px;top:722px;font-size:11px;line-height:11px;color:#262626;font-weight:normal;letter-spacing:-0.15px">False</div>
<div style="position:absolute;left:222px;top:748px;width:14px;height:14px;box-sizing:border-box;border:1px solid #e3e3e3;border-radius:3px;background:#fff"></div>
<div style="position:absolute;left:279px;top:743px;width:23px;height:23px;box-sizing:border-box;border:1px solid #e9e9e9;border-radius:3px;background:#fafafa"></div>
<svg style="position:absolute;left:285.3px;top:748.5px;" width="12" height="12" viewBox="0 0 12 12"><path d="M0.6 10.9 L1.1 8.9 L8.9 1.1 L10.4 2.6 L2.6 10.4Z" fill="none" stroke="#7a7a7a" stroke-width="0.9" stroke-linejoin="round"/><path d="M8.5 1.5 L10 3 L10.8 2.2 L9.3 0.7Z" fill="#666" stroke="#666" stroke-width="0.8"/><line x1="2" y1="9.5" x2="9" y2="2.5" stroke="#aaa" stroke-width="0.6" stroke-dasharray="1 1"/></svg>
<div class="t" style="left:390.6px;top:749px;font-size:11px;line-height:11px;color:#262626;font-weight:normal;letter-spacing:-0.15px">Mobile Dev, Elecate</div>
<div class="t" style="left:836.8px;top:749px;font-size:11px;line-height:11px;color:#262626;font-weight:normal;letter-spacing:-0.15px">Accepted</div>
<div class="t" style="left:949px;top:749px;font-size:11px;line-height:11px;color:#262626;font-weight:normal;letter-spacing:-0.3px">09/23/2025</div>
<div class="t" style="left:1065.2px;top:749px;font-size:11px;line-height:11px;color:#262626;font-weight:normal;letter-spacing:-0.15px">0</div>
<div class="t" style="left:1182.9px;top:749px;font-size:11px;line-height:11px;color:#262626;font-weight:normal;letter-spacing:-0.3px">09/23/2025</div>
<div class="t" style="left:1410.9px;top:749px;font-size:11px;line-height:11px;color:#262626;font-weight:normal;letter-spacing:-0.15px">4343438889</div>
<div class="t" style="left:1656.3px;top:749px;font-size:11px;line-height:11px;color:#262626;font-weight:normal;letter-spacing:-0.15px">3434348889</div>
<div class="t" style="left:1778.9px;top:749px;font-size:11px;line-height:11px;color:#262626;font-weight:normal;letter-spacing:-0.15px">False</div>
<div style="position:absolute;left:270px;top:254px;width:1px;height:516px;background:#e4e4e4"></div>
<div style="position:absolute;left:381px;top:254px;width:1px;height:516px;background:#e4e4e4"></div>
<div style="position:absolute;left:604px;top:254px;width:1px;height:516px;background:#e4e4e4"></div>
<div style="position:absolute;left:827px;top:254px;width:1px;height:516px;background:#e4e4e4"></div>
<div style="position:absolute;left:940px;top:254px;width:1px;height:516px;background:#e4e4e4"></div>
<div style="position:absolute;left:1057px;top:254px;width:1px;height:516px;background:#e4e4e4"></div>
<div style="position:absolute;left:1173px;top:254px;width:1px;height:516px;background:#e4e4e4"></div>
<div style="position:absolute;left:1290px;top:254px;width:1px;height:516px;background:#e4e4e4"></div>
<div style="position:absolute;left:1401px;top:254px;width:1px;height:516px;background:#e4e4e4"></div>
<div style="position:absolute;left:1524px;top:254px;width:1px;height:516px;background:#e4e4e4"></div>
<div style="position:absolute;left:1647px;top:254px;width:1px;height:516px;background:#e4e4e4"></div>
<div style="position:absolute;left:1769px;top:254px;width:1px;height:516px;background:#e4e4e4"></div>
<div style="position:absolute;left:1853px;top:254px;width:15px;height:516px;background:#fafafa"></div>
<svg style="position:absolute;left:1856px;top:259px;" width="9" height="7" viewBox="0 0 9 7"><path d="M0.5 6.5 L4.5 0.7 L8.5 6.5Z" fill="#8b8b8b"/></svg>
<div style="position:absolute;left:1856px;top:272px;width:9px;height:92px;background:#8b8b8b;border-radius:4.5px"></div>
<svg style="position:absolute;left:1856px;top:758px;" width="9" height="7" viewBox="0 0 9 7"><path d="M0.5 0.5 L4.5 6.3 L8.5 0.5Z" fill="#8b8b8b"/></svg>
<div style="position:absolute;left:214px;top:770px;width:1654px;height:1px;background:#e2e2e2"></div>
<div style="position:absolute;left:214px;top:771px;width:1654px;height:34px;background:#fafafa"></div>
<svg style="position:absolute;left:227px;top:785px;" width="7" height="7" viewBox="0 0 7 7"><rect x="0" y="0" width="1.3" height="7" fill="#999"/><path d="M6.5 0 V7 L1.5 3.5Z" fill="#999"/></svg>
<svg style="position:absolute;left:251px;top:785px;" width="6" height="7" viewBox="0 0 6 7"><path d="M5.5 0 V7 L0.5 3.5Z" fill="#888"/></svg>
<div style="position:absolute;left:266px;top:777px;width:21px;height:23px;background:#fadbd8"></div>
<div class="t" style="left:273px;top:783px;font-size:11px;line-height:11px;color:#ff5a3c;font-weight:normal;">1</div>
<div class="t" style="left:295.5px;top:783px;font-size:11px;line-height:11px;color:#ff3f2e;font-weight:normal;">2</div>
<svg style="position:absolute;left:318px;top:785px;" width="6" height="7" viewBox="0 0 6 7"><path d="M0.5 0 V7 L5.5 3.5Z" fill="#222"/></svg>
<svg style="position:absolute;left:341px;top:785px;" width="7" height="7" viewBox="0 0 7 7"><path d="M0.5 0 V7 L5.5 3.5Z" fill="#222"/><rect x="5.5" y="0" width="1.3" height="7" fill="#222"/></svg>
<div class="t" style="left:1768.5px;top:783px;font-size:11px;line-height:11px;color:#333;font-weight:normal;letter-spacing:-0.2px">1 - 100 of 126 items</div>
<svg style="position:absolute;left:930px;top:215px;" width="140" height="570" viewBox="0 0 140 570"><rect x="11" y="10.1" width="116.25" height="548.45" fill="none" stroke="#00ff00" stroke-width="3.7"/></svg>
<div style="position:absolute;left:1577px;top:868px;width:205px;height:10px;box-sizing:border-box;border:1px solid #ececec;border-radius:6px;background:#fafafa"></div>
</div></div></body></html>
